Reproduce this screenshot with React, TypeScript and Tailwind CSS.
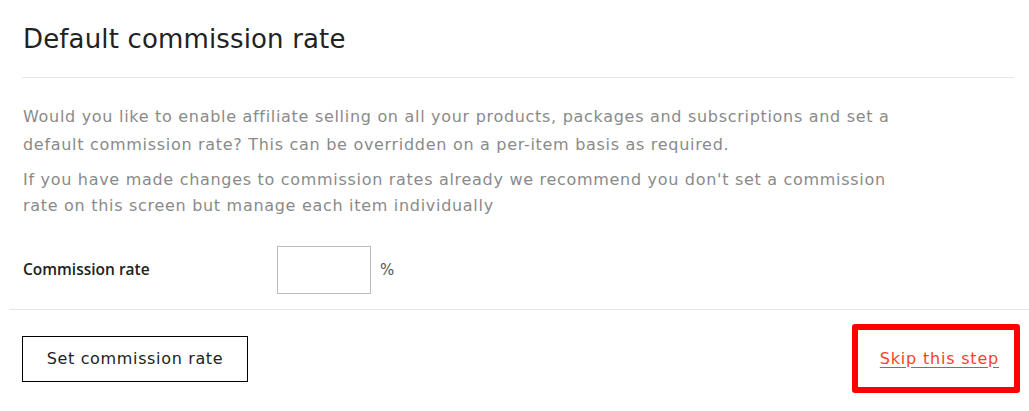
import React from 'react';

const font = { fontFamily: '"DejaVu Sans", "Noto Sans", sans-serif' };

export default function App() {
  return (
    <div className="w-[1029px] h-[411px] bg-white overflow-hidden" style={font}>
      <div className="pl-[22px] pr-[15px]">
        <div className="h-[78px] border-b border-[#e6e6e6] flex items-center pt-[2px]">
          <h1 className="text-[26px] text-[#222] pl-[1px] tracking-[0.15px]">Default commission rate</h1>
        </div>
      </div>

      <div className="pl-[23px] pt-[25px] text-[16px] tracking-[0.7px] text-[#8a8a8a] leading-[28px] whitespace-nowrap">
        <p>
          Would you like to enable affiliate selling on all your products, packages and subscriptions and set a
          <br />
          default commission rate? This can be overridden on a per-item basis as required.
        </p>
        <p className="mt-[8px] leading-[26px]">
          If you have made changes to commission rates already we recommend you don't set a commission
          <br />
          rate on this screen but manage each item individually
        </p>
      </div>

      <div className="flex items-center pl-[23px] mt-[27px]">
        <label
          className="w-[254px] text-[15.5px] font-semibold text-[#222]"
          style={{ fontFamily: '"Open Sans", "DejaVu Sans", sans-serif' }}
        >
          Commission rate
        </label>
        <input
          type="text"
          className="w-[94px] h-[48px] border border-[#bbbbbb] outline-none px-2"
        />
        <span className="ml-[9px] text-[15px] text-[#555]">%</span>
      </div>

      <div className="ml-[9px] mt-[15px] border-t border-[#e6e6e6] flex items-center justify-between pl-[13px] pr-[9px] pt-[14px]">
        <button className="w-[226px] h-[46px] border-[1.5px] border-black text-[16px] tracking-[0.65px] text-[#222]">
          Set commission rate
        </button>
        <div className="w-[168px] h-[69px] border-[6px] border-[#ff0000] rounded-[3px] flex items-center justify-end pr-[15px]">
          <a href="#" className="text-[16px] tracking-[0.8px] text-[#ff3f2a] underline underline-offset-[3px]">
            Skip this step
          </a>
        </div>
      </div>
    </div>
  );
}
